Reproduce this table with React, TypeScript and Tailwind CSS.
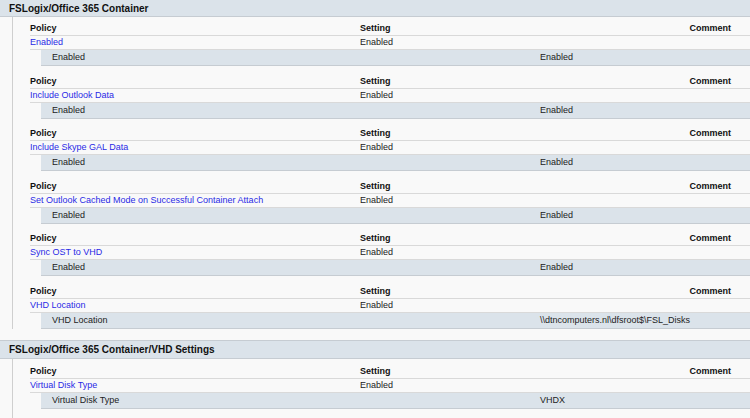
import React from "react";

type Item = { policy: string; setting: string; label: string; value: string };

const section1: Item[] = [
  { policy: "Enabled", setting: "Enabled", label: "Enabled", value: "Enabled" },
  { policy: "Include Outlook Data", setting: "Enabled", label: "Enabled", value: "Enabled" },
  { policy: "Include Skype GAL Data", setting: "Enabled", label: "Enabled", value: "Enabled" },
  {
    policy: "Set Outlook Cached Mode on Successful Container Attach",
    setting: "Enabled",
    label: "Enabled",
    value: "Enabled",
  },
  { policy: "Sync OST to VHD", setting: "Enabled", label: "Enabled", value: "Enabled" },
  {
    policy: "VHD Location",
    setting: "Enabled",
    label: "VHD Location",
    value: "\\\\dtncomputers.nl\\dfsroot$\\FSL_Disks",
  },
];

const section2: Item[] = [
  { policy: "Virtual Disk Type", setting: "Enabled", label: "Virtual Disk Type", value: "VHDX" },
];

const gaps1 = ["mb-[9px]", "mb-[8px]", "mb-[9px]", "mb-[8px]", "mb-[9px]", "mb-[11px]"];

function Block({ item, gap }: { item: Item; gap: string }) {
  return (
    <div className={gap}>
      <div className="flex h-[14px] items-center border-b border-[#d9d9d9] pr-[19px] font-bold text-[#111]">
        <div className="w-[330px]">Policy</div>
        <div className="flex-1">Setting</div>
        <div>Comment</div>
      </div>
      <div className="flex h-[14px] items-center border-b border-[#d9d9d9]">
        <div className="w-[330px] text-[#2a2ae6]">{item.policy}</div>
        <div className="flex-1 text-[#222]">{item.setting}</div>
      </div>
      <div className="ml-[11px] flex h-[16px] items-center border-b border-[#c6ccd2] bg-[#dbe3ea] text-[#222]">
        <div className="w-[499px] pl-[11px]">{item.label}</div>
        <div>{item.value}</div>
      </div>
    </div>
  );
}

export default function App() {
  return (
    <div
      className="h-[418px] w-[750px] overflow-hidden bg-[#f9f9f9] text-[9px] leading-[13px]"
      style={{ fontFamily: '"Liberation Sans", Arial, sans-serif' }}
    >
      <div className="flex h-[17px] items-center border-b border-[#c6ccd2] bg-[#dbe3ea] pl-[9px] text-[10px] font-bold text-[#111]">
        FSLogix/Office 365 Container
      </div>
      <div className="ml-[12px] border-l border-[#cfcfcf] pl-[17px] pt-[5px]">
        {section1.map((it, i) => (
          <Block key={i} item={it} gap={gaps1[i]} />
        ))}
      </div>
      <div className="flex h-[19px] items-center border-y border-[#c6ccd2] bg-[#dbe3ea] pl-[9px] text-[10px] font-bold text-[#111]">
        FSLogix/Office 365 Container/VHD Settings
      </div>
      <div className="ml-[12px] h-[100px] border-l border-[#cfcfcf] pl-[17px] pt-[6px]">
        {section2.map((it, i) => (
          <Block key={i} item={it} gap="mb-[9px]" />
        ))}
      </div>
    </div>
  );
}
